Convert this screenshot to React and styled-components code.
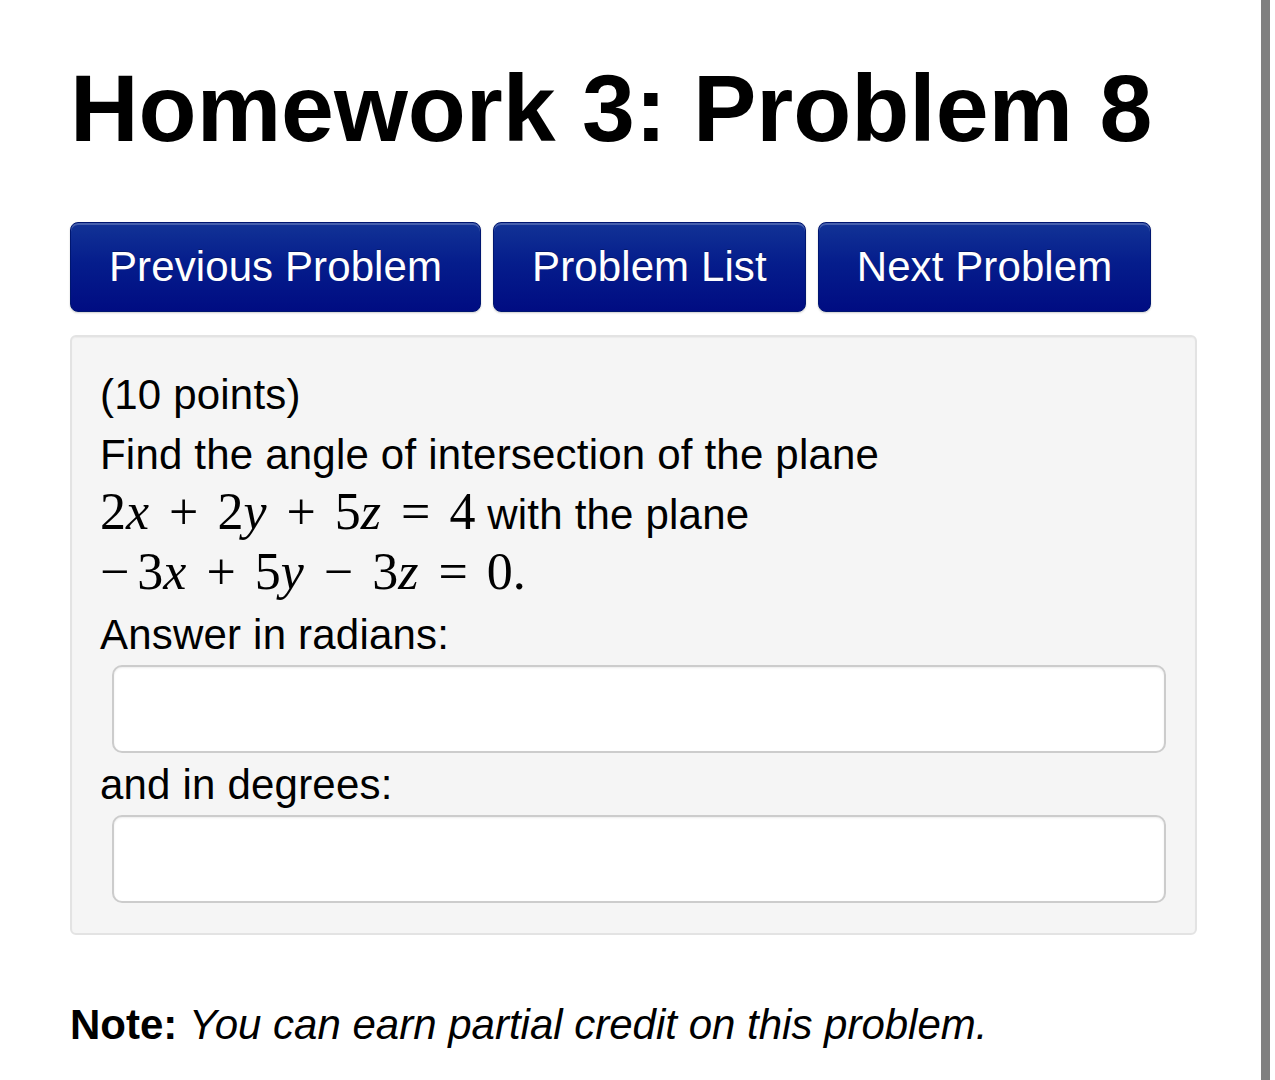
import React from 'react';
import styled, { createGlobalStyle } from 'styled-components';

const GlobalStyle = createGlobalStyle`
    html, body {
        margin: 0;
        padding: 0;
        background: #ffffff;
        font-family: "Liberation Sans", Arial, Helvetica, sans-serif;
        color: #000000;
    }
`;

const Page = styled.div`
    display: flex;
    min-height: 100vh;
`;

const Main = styled.main`
    flex: 1;
    padding: 56px 64px 0 70px;
`;

const ScrollRail = styled.div`
    width: 9px;
    margin-right: 5px;
    background: #808080;
    min-height: 100vh;
`;

const Title = styled.h1`
    margin: 0;
    font-size: 95px;
    line-height: 1.1;
    font-weight: 700;
    letter-spacing: 0;
`;

const NavBar = styled.nav`
    display: flex;
    gap: 12px;
    margin-top: 61px;
`;

const NavButton = styled.a`
    display: flex;
    align-items: center;
    height: 90px;
    box-sizing: border-box;
    padding: 0 38px;
    border: 1px solid #001670;
    border-radius: 8px;
    background: linear-gradient(to bottom, #123396 0%, #051d8c 45%, #000c82 100%);
    box-shadow: inset 0 2px 0 rgba(255, 255, 255, 0.22), 0 1px 2px rgba(0, 0, 0, 0.2);
    color: #ffffff;
    font-size: 42px;
    letter-spacing: 0.1px;
    text-decoration: none;
    text-shadow: 0 -1px 0 rgba(0, 0, 0, 0.25);
    cursor: pointer;
`;

const ProblemBox = styled.section`
    margin-top: 23px;
    padding: 28px;
    border: 2px solid #e3e3e3;
    border-radius: 6px;
    background: #f5f5f5;
    box-shadow: inset 0 1px 1px rgba(0, 0, 0, 0.04);
    font-size: 42px;
    line-height: 60px;
    letter-spacing: 0.2px;
`;

const Line = styled.div`
    white-space: nowrap;
`;

const Math = styled.span`
    font-family: "Liberation Serif", "Times New Roman", serif;
    font-size: 52px;
    line-height: 1;
    letter-spacing: 0;
`;

const V = styled.i`
    font-style: italic;
    margin-right: 1px;
`;

const Op = styled.span`
    margin: 0 ${({ $space }) => $space}px;
`;

const Lead = styled.span`
    margin-right: 8px;
`;

const AnswerInput = styled.input`
    display: block;
    box-sizing: border-box;
    width: calc(100% - 13px);
    height: 88px;
    margin: 0 0 2px 12px;
    border: 2px solid #cccccc;
    border-radius: 10px;
    background: #ffffff;
    box-shadow: inset 0 1px 2px rgba(0, 0, 0, 0.08);
    font-size: 40px;
    padding: 0 14px;
    outline: none;
`;

const Note = styled.p`
    margin: 60px 0 0;
    font-size: 42px;
    line-height: 60px;

    strong {
        font-weight: 700;
    }

    em {
        font-style: italic;
    }
`;

const navItems = ['Previous Problem', 'Problem List', 'Next Problem'];

const App = () => {
    return (
        <>
            <GlobalStyle />
            <Page>
                <Main>
                    <Title>Homework 3: Problem 8</Title>
                    <NavBar>
                        {navItems.map((label) => (
                            <NavButton key={label}>{label}</NavButton>
                        ))}
                    </NavBar>
                    <ProblemBox>
                        <Line>(10 points)</Line>
                        <Line>Find the angle of intersection of the plane</Line>
                        <Line>
                            <Math>
                                2<V>x</V>
                                <Op $space={19}>+</Op>2<V>y</V>
                                <Op $space={19}>+</Op>5<V>z</V>
                                <Op $space={19}>=</Op>4
                            </Math>{' '}
                            with the plane
                        </Line>
                        <Line>
                            <Math>
                                <Lead>−</Lead>3<V>x</V>
                                <Op $space={19}>+</Op>5<V>y</V>
                                <Op $space={19}>−</Op>3<V>z</V>
                                <Op $space={19}>=</Op>0.
                            </Math>
                        </Line>
                        <Line>Answer in radians:</Line>
                        <AnswerInput type="text" />
                        <Line>and in degrees:</Line>
                        <AnswerInput type="text" />
                    </ProblemBox>
                    <Note>
                        <strong>Note:</strong> <em>You can earn partial credit on this problem.</em>
                    </Note>
                </Main>
                <ScrollRail />
            </Page>
        </>
    );
};

export default App;
